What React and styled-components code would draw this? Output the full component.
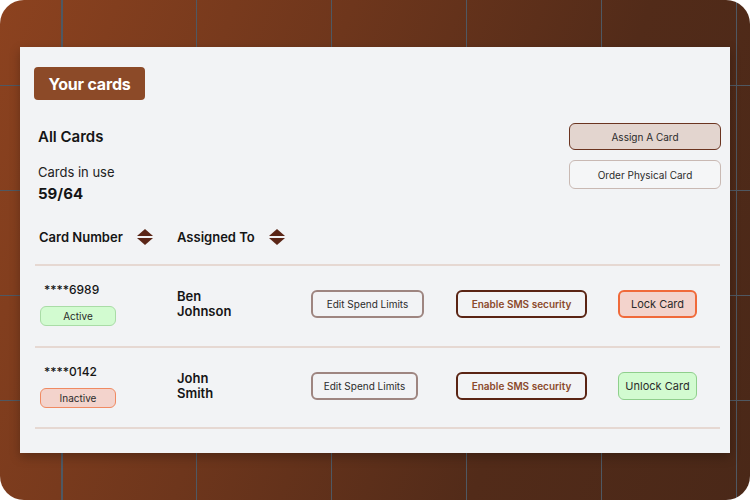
import React from "react"
import styled, { createGlobalStyle } from "styled-components"

const GlobalStyle = createGlobalStyle`
  html, body {
    margin: 0;
    padding: 0;
    background: #ffffff;
  }
  body {
    font-family: "Inter", "Liberation Sans", sans-serif;
    color: #1b1b1b;
  }
  * {
    box-sizing: border-box;
  }
`

const cards = [
  {
    number: "****6989",
    status: "Active",
    first: "Ben",
    last: "Johnson",
    editWidth: 113,
    locked: false,
  },
  {
    number: "****0142",
    status: "Inactive",
    first: "John",
    last: "Smith",
    editWidth: 107,
    locked: true,
  },
]

const SortIcon = () => (
  <svg width="16" height="16" viewBox="0 0 16 16">
    <polygon points="0,7 8,0 16,7" fill="#5b2617" />
    <polygon points="0,9 8,16 16,9" fill="#5b2617" />
  </svg>
)

const App = () => {
  return (
    <>
      <GlobalStyle />
      <Frame>
        <Panel>
          <TitlePill>Your cards</TitlePill>
          <Summary>
            <SummaryText>
              <Heading>All Cards</Heading>
              <UsageLabel>Cards in use</UsageLabel>
              <UsageValue>59/64</UsageValue>
            </SummaryText>
            <Actions>
              <ActionButton primary>Assign A Card</ActionButton>
              <ActionButton>Order Physical Card</ActionButton>
            </Actions>
          </Summary>
          <Table>
            <HeaderRow>
              <HeaderCell>
                Card Number <SortIcon />
              </HeaderCell>
              <HeaderCell>
                Assigned To <SortIcon />
              </HeaderCell>
            </HeaderRow>
            {cards.map(card => (
              <Row key={card.number}>
                <CardCell>
                  <CardNumber>{card.number}</CardNumber>
                  <StatusBadge active={!card.locked}>{card.status}</StatusBadge>
                </CardCell>
                <Name>
                  {card.first}
                  <br />
                  {card.last}
                </Name>
                <div>
                  <EditButton style={{ width: card.editWidth }}>
                    Edit Spend Limits
                  </EditButton>
                </div>
                <div>
                  <SmsButton>Enable SMS security</SmsButton>
                </div>
                <div>
                  <LockButton unlock={card.locked}>
                    {card.locked ? "Unlock Card" : "Lock Card"}
                  </LockButton>
                </div>
              </Row>
            ))}
          </Table>
        </Panel>
      </Frame>
    </>
  )
}

export default App

const Frame = styled.div`
  width: 750px;
  height: 500px;
  border-radius: 24px;
  overflow: hidden;
  padding: 47px 20px 47px 20px;
  background-color: #5a2d1a;
  background-image: repeating-linear-gradient(
      to right,
      transparent 0px,
      transparent 61.5px,
      #4f5862 61.5px,
      #4f5862 62.5px,
      transparent 62.5px,
      transparent 134.8px
    ),
    repeating-linear-gradient(
      to bottom,
      transparent 0px,
      transparent 85.5px,
      #4f5862 85.5px,
      #4f5862 86.5px,
      transparent 86.5px,
      transparent 105px
    ),
    linear-gradient(110deg, #8c421f 0%, #6e361c 38%, #522b19 70%, #4a2818 100%);
`

const Panel = styled.div`
  width: 710px;
  height: 406px;
  background: #f2f3f5;
  padding: 20px 9px 0 14px;
  display: flex;
  flex-direction: column;
  box-shadow: 0 4px 10px rgba(0, 0, 0, 0.25);
`

const TitlePill = styled.div`
  align-self: flex-start;
  width: 111px;
  height: 33px;
  border-radius: 4px;
  background: #8c4a28;
  color: #ffffff;
  font-weight: 700;
  font-size: 16px;
  letter-spacing: -0.2px;
  display: flex;
  align-items: center;
  justify-content: center;
`

const Summary = styled.div`
  display: flex;
  justify-content: space-between;
  align-items: flex-start;
  margin-top: 23px;
`

const SummaryText = styled.div`
  display: flex;
  flex-direction: column;
  padding-left: 4px;
  padding-top: 4px;
`

const Heading = styled.div`
  font-size: 15px;
  font-weight: 600;
  line-height: 20px;
  color: #151515;
`

const UsageLabel = styled.div`
  font-size: 13px;
  line-height: 18px;
  margin-top: 16px;
  color: #222;
`

const UsageValue = styled.div`
  font-size: 15px;
  font-weight: 700;
  line-height: 20px;
  margin-top: 3px;
  color: #151515;
`

const Actions = styled.div`
  display: flex;
  flex-direction: column;
  gap: 10px;
  width: 152px;
`

const ActionButton = styled.div`
  height: ${props => (props.primary ? "27px" : "29px")};
  border-radius: 6px;
  border: 1px solid ${props => (props.primary ? "#6b3420" : "#c9b9b3")};
  background: ${props => (props.primary ? "#e3d5cf" : "#f5f6f7")};
  color: #2b2b2b;
  font-size: 10px;
  display: flex;
  align-items: center;
  justify-content: center;
`

const Table = styled.div`
  margin-top: 21px;
  margin-left: 1px;
  width: 685px;
`

const columns = "142px 134px 145px 162px 1fr"

const HeaderRow = styled.div`
  display: grid;
  grid-template-columns: ${columns};
  align-items: center;
  height: 24px;
  margin-bottom: 15px;
`

const HeaderCell = styled.div`
  display: flex;
  align-items: center;
  gap: 14px;
  font-size: 13px;
  font-weight: 600;
  color: #151515;
  &:first-child {
    padding-left: 4px;
  }
`

const Row = styled.div`
  display: grid;
  grid-template-columns: ${columns};
  align-items: center;
  height: 82px;
  border-top: 2px solid #e6d8d2;
  padding-bottom: 4px;
  &:last-child {
    height: 83px;
    border-bottom: 2px solid #e6d8d2;
  }
`

const CardCell = styled.div`
  display: flex;
  flex-direction: column;
  align-items: flex-start;
  gap: 8px;
  padding-left: 5px;
`

const CardNumber = styled.div`
  font-size: 12px;
  font-weight: 500;
  line-height: 16px;
  padding-left: 4px;
  color: #151515;
`

const StatusBadge = styled.div`
  width: 76px;
  height: 20px;
  border-radius: 6px;
  border: 1px solid ${props => (props.active ? "#a9dca6" : "#f08a62")};
  background: ${props => (props.active ? "#d2fbd0" : "#f3d3cc")};
  font-size: 10px;
  color: #2b2b2b;
  display: flex;
  align-items: center;
  justify-content: center;
`

const Name = styled.div`
  font-size: 13px;
  font-weight: 600;
  line-height: 15px;
  color: #151515;
`

const RowButton = styled.div`
  height: 28px;
  border-radius: 6px;
  border: 2px solid;
  font-size: 10px;
  display: flex;
  align-items: center;
  justify-content: center;
`

const EditButton = styled(RowButton)`
  border-color: #9e8580;
  color: #2b2b2b;
`

const SmsButton = styled(RowButton)`
  width: 131px;
  border-color: #5a2414;
  color: #8b4a2b;
  font-weight: 600;
`

const LockButton = styled(RowButton)`
  width: 79px;
  border-width: ${props => (props.unlock ? "1.5px" : "2px")};
  border-color: ${props => (props.unlock ? "#8fcf8c" : "#f06a3a")};
  background: ${props => (props.unlock ? "#d2fbd0" : "#f3d3cc")};
  color: #2b2b2b;
  font-size: 11px;
`
